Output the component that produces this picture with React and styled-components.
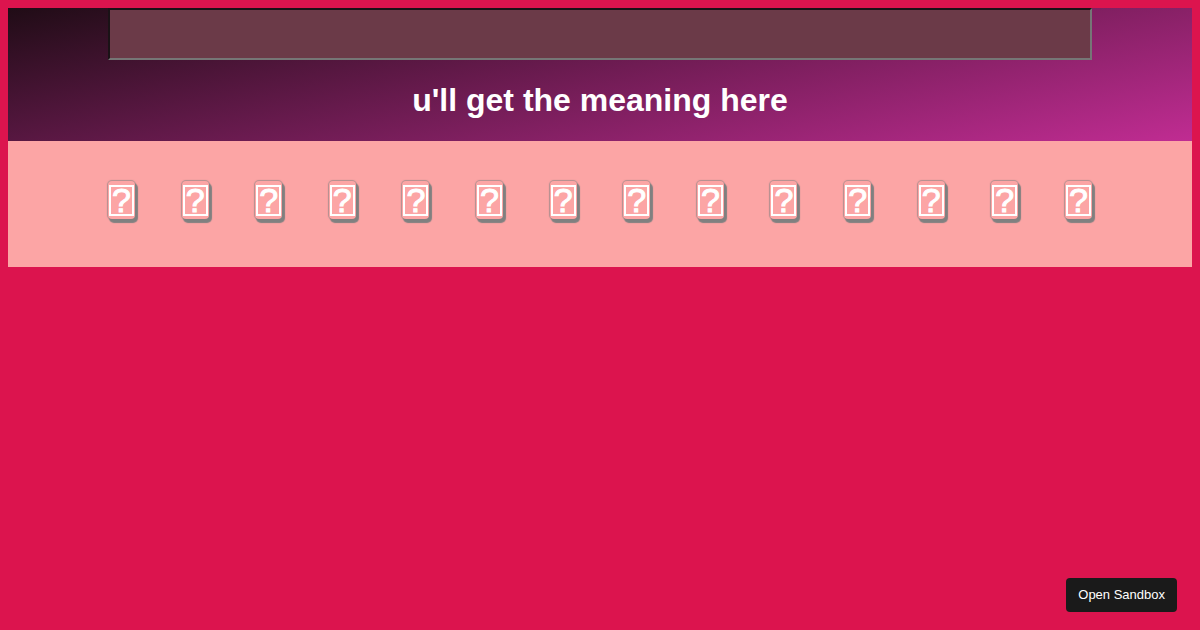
import React, { useState } from "react";
import styled, { createGlobalStyle } from "styled-components";

const GlobalStyle = createGlobalStyle`
  body {
    margin: 8px;
    background: #dc144e;
    font-family: "Liberation Sans", Arial, sans-serif;
  }
`;

const Header = styled.header`
  display: flex;
  flex-direction: column;
  align-items: center;
  padding: 0 100px;
  background: linear-gradient(168deg, #200c16, #c02c92);
`;

const Search = styled.input`
  box-sizing: border-box;
  width: 100%;
  height: 52px;
  padding: 0 16px;
  border: 2px solid;
  border-color: #1a1216 #767676 #767676 #1a1216;
  background: #6b3a48;
  color: #fff;
  font: inherit;
  font-size: 24px;
  text-align: center;
`;

const Meaning = styled.h1`
  margin: 21px 0;
  color: #fff;
  font-size: 32px;
  line-height: 39px;
`;

const SymbolBar = styled.main`
  display: flex;
  justify-content: space-between;
  padding: 40px 100px 48px;
  background: #fca5a5;
`;

const SymbolButton = styled.button`
  display: flex;
  align-items: center;
  justify-content: center;
  width: 27px;
  height: 38px;
  padding: 0;
  border: 0;
  border-radius: 4px;
  background: #fca5a5;
  box-shadow: 2px 3px 1px 1px gray, 0 0 1px 1px rgba(128, 128, 128, 0.6);
  cursor: pointer;
`;

const Tile = styled.span`
  box-sizing: border-box;
  display: flex;
  align-items: center;
  justify-content: center;
  width: 25px;
  height: 31px;
  border: 2px solid #fff;
  color: #fff;
  font: 34px/27px "Liberation Sans", Arial, sans-serif;
  -webkit-text-stroke: 1px #fff;
`;

const SandboxButton = styled.button`
  position: fixed;
  right: 23px;
  bottom: 18px;
  height: 34px;
  padding: 0 12px 2px;
  border: 0;
  border-radius: 4px;
  background: #1a1a1a;
  color: #fff;
  font: 13px "Liberation Sans", Arial, sans-serif;
  cursor: pointer;
`;

const symbols = Array.from({ length: 14 }, () => "?");
const prompt = "u'll get the meaning here";

export default function App() {
  const [meaning, setMeaning] = useState(prompt);
  return (
    <>
      <GlobalStyle />
      <Header>
        <Search aria-label="Symbol" onChange={(e) => setMeaning(e.target.value || prompt)} />
        <Meaning>{meaning}</Meaning>
      </Header>
      <SymbolBar>
        {symbols.map((symbol, i) => (
          <SymbolButton key={i} onClick={() => setMeaning(symbol)}>
            <Tile>{symbol}</Tile>
          </SymbolButton>
        ))}
      </SymbolBar>
      <SandboxButton>Open Sandbox</SandboxButton>
    </>
  );
}
